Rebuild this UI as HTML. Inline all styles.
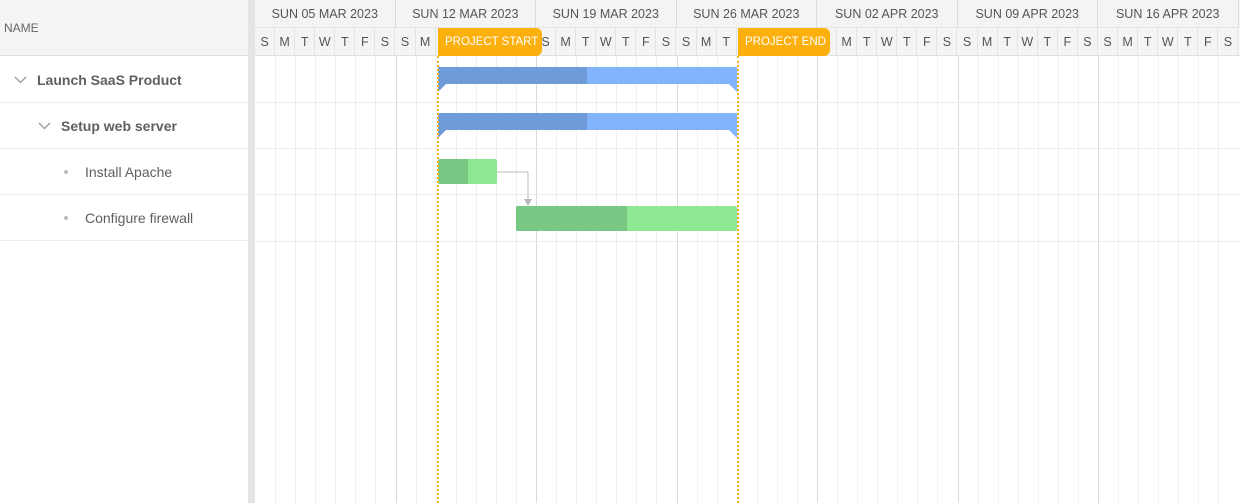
<!DOCTYPE html>
<html><head><meta charset="utf-8">
<style>
*{margin:0;padding:0;box-sizing:border-box}
body{width:1240px;height:503px;overflow:hidden;background:#fff;font-family:"Liberation Sans",Arial,sans-serif;position:relative}
.a{position:absolute}
#left{left:0;top:0;width:248px;height:503px;background:#fff}
#lh{left:0;top:0;width:248px;height:56px;background:#f3f4f4;border-bottom:1px solid #e0e0e0;font-size:12px;color:#666;padding:21px 0 0 4px}
.row{left:0;width:248px;height:46px;border-bottom:1px solid #ececec;font-size:14px;color:#5f5f5f}
#split{left:248px;top:0;width:7px;height:503px;background:#e4e5e7}
#hdr{left:255px;top:0;width:985px;height:56px;background:#f3f4f4;border-bottom:1px solid #e0e0e0}
.wk{top:0;height:28px;border-right:1px solid #dcdcdc;border-bottom:1px solid #e3e3e3;font-size:12.5px;color:#555;text-align:center;line-height:28px}
.dy{top:28px;height:28px;border-right:1px solid #e3e3e3;font-size:12.5px;color:#555;text-align:center;line-height:28px}
.vl{top:56px;height:447px;width:1px;background:#f0f0f0}
.vw{top:56px;height:447px;width:1px;background:#d9d9d9}
.hl{left:255px;width:985px;height:1px;background:#ececec}
.lbl{top:28px;height:28px;background:#fbb00d;color:#fff;font-size:11.5px;line-height:28px;padding-left:7px;border-radius:0 6px 6px 0;white-space:nowrap;overflow:hidden}
.dot{top:56px;height:447px;width:0;border-left:2px dotted #f7b21b}
</style></head><body>
<div id="left" class="a"></div>
<div id="lh" class="a">NAME</div>
<div class="a row" style="top:57px"><svg class="a" style="left:14px;top:19px" width="13" height="8"><path d="M1 1L6.5 6.5L12 1" stroke="#999" stroke-width="1.3" fill="none"/></svg><div class="a" style="left:37px;top:15px;font-weight:bold">Launch SaaS Product</div></div>
<div class="a row" style="top:103px"><svg class="a" style="left:38px;top:19px" width="13" height="8"><path d="M1 1L6.5 6.5L12 1" stroke="#999" stroke-width="1.3" fill="none"/></svg><div class="a" style="left:61px;top:15px;font-weight:bold">Setup web server</div></div>
<div class="a row" style="top:149px"><div class="a" style="left:64px;top:21px;width:4px;height:4px;border-radius:2px;background:#bbb"></div><div class="a" style="left:85px;top:15px">Install Apache</div></div>
<div class="a row" style="top:195px"><div class="a" style="left:64px;top:21px;width:4px;height:4px;border-radius:2px;background:#bbb"></div><div class="a" style="left:85px;top:15px">Configure firewall</div></div>
<div id="split" class="a"></div>
<div id="hdr" class="a"></div>
<div id="grid"></div>
<div class="a hl" style="top:102px"></div>
<div class="a hl" style="top:148px"></div>
<div class="a hl" style="top:194px"></div>
<div class="a hl" style="top:241px"></div>
<svg class="a" style="left:0;top:0" width="1240" height="503">
 <path d="M438 67H587V84H446L438 92Z" fill="#6f9bd8"/>
 <path d="M587 67H737V92L729 84H587Z" fill="#82b4fc"/>
 <path d="M438 113H587V130H446L438 138Z" fill="#6f9bd8"/>
 <path d="M587 113H737V138L729 130H587Z" fill="#82b4fc"/>
 <rect x="438" y="159" width="59" height="25" rx="2" fill="#8ee893"/>
 <path d="M440 159H468V184H440A2 2 0 0 1 438 182V161A2 2 0 0 1 440 159Z" fill="#78c783"/>
 <rect x="516" y="206" width="221" height="25" rx="2" fill="#8ee893"/>
 <path d="M518 206H627V231H518A2 2 0 0 1 516 229V208A2 2 0 0 1 518 206Z" fill="#78c783"/>
 <path d="M497 172H528V200" stroke="#bbb" stroke-width="1" fill="none"/>
 <path d="M524 199L532 199L528 206Z" fill="#bbb"/>
</svg>
<div class="a dot" style="left:437px"></div>
<div class="a dot" style="left:737px"></div>
<div class="a lbl" style="left:438px;width:104px">PROJECT START</div>
<div class="a lbl" style="left:738px;width:92px">PROJECT END</div>
<script>
var g=document.getElementById('grid'),h='';
var wks=['SUN 05 MAR 2023','SUN 12 MAR 2023','SUN 19 MAR 2023','SUN 26 MAR 2023','SUN 02 APR 2023','SUN 09 APR 2023','SUN 16 APR 2023'];
var d='SMTWTFS',W=140.5,D=W/7,x0=255;
for(var i=0;i<7;i++){
 var x=x0+i*W;
 h+='<div class="a wk" style="left:'+x+'px;width:'+W+'px">'+wks[i]+'</div>';
 for(var j=0;j<7;j++){
  var dx=x+j*D;
  h+='<div class="a dy" style="left:'+dx+'px;width:'+D+'px">'+d[j]+'</div>';
  if(j>0)h+='<div class="a vl" style="left:'+Math.round(dx)+'px"></div>';
 }
 if(i>0)h+='<div class="a vw" style="left:'+Math.round(x)+'px"></div>';
}
g.innerHTML=h;
</script>
</body></html>
